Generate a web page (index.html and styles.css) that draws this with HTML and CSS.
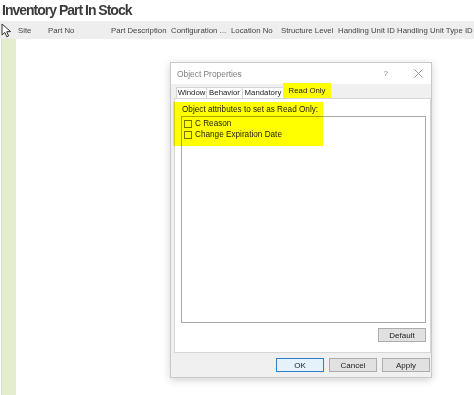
FILE: index.html
```html
<!DOCTYPE html>
<html lang="en">
<head>
  <meta charset="UTF-8" />
  <title>Inventory Part In Stock</title>
  <link rel="stylesheet" href="styles.css">
</head>
<body>

  <h1 class="page-title">Inventory Part In Stock</h1>

  <div class="grid">
    <div class="grid-head">
      <div class="col col-cursor">
        <svg width="12" height="15" viewBox="0 0 12 15">
          <path d="M1 1 L1 12 L3.8 9.4 L5.8 13.8 L7.6 13 L5.7 8.7 L9.6 8.6 Z" fill="#fff" stroke="#333" stroke-width="1" stroke-linejoin="round"/>
        </svg>
      </div>
      <div class="col" style="width:30px">Site</div>
      <div class="col" style="width:63px">Part No</div>
      <div class="col" style="width:60px">Part Description</div>
      <div class="col" style="width:60px">Configuration ...</div>
      <div class="col" style="width:50px">Location No</div>
      <div class="col" style="width:57px">Structure Level</div>
      <div class="col" style="width:59px">Handling Unit ID</div>
      <div class="col" style="width:78px">Handling Unit Type ID</div>
    </div>
    <div class="grid-body">
      <div class="row-strip"></div>
    </div>
  </div>

  <!-- ventana de propiedades -->
  <div class="dialog">
    <div class="dialog-title">
      <span>Object Properties</span>
      <span class="title-btns">
        <span class="help">?</span>
        <svg width="9" height="9" viewBox="0 0 9 9">
          <path d="M0.5 0.5 L8.5 8.5 M8.5 0.5 L0.5 8.5" stroke="#888" stroke-width="0.9"/>
        </svg>
      </span>
    </div>

    <div class="tabs">
      <div class="tab" style="width:29px">Window</div>
      <div class="tab" style="width:35px">Behavior</div>
      <div class="tab" style="width:40px">Mandatory</div>
      <div class="tab active" style="width:46px">Read Only</div>
    </div>

    <div class="panel">
      <div class="panel-label">Object attributes to set as Read Only:</div>
      <div class="listbox">
        <label class="item"><span class="check"></span>C Reason</label>
        <label class="item"><span class="check"></span>Change Expiration Date</label>
      </div>
      <div class="panel-actions">
        <button class="btn">Default</button>
      </div>
      <div class="marker"></div>
    </div>

    <div class="dialog-footer">
      <button class="btn btn-ok">OK</button>
      <button class="btn">Cancel</button>
      <button class="btn">Apply</button>
    </div>
  </div>

</body>
</html>
```

FILE: styles.css
```css
body {
  margin: 0;
  width: 474px;
  height: 395px;
  overflow: hidden;
  background-color: #fff;
  font-family: 'Liberation Sans', Arial, sans-serif;
  position: relative;
}

.page-title {
  margin: 0;
  height: 21px;
  padding: 1px 0 0 2px;
  box-sizing: border-box;
  font-family: 'Liberation Sans', Arial, sans-serif;
  font-size: 14px;
  letter-spacing: -1px;
  font-weight: bold;
  color: #3b3b3b;
  line-height: 18px;
}

.grid-head {
  display: flex;
  height: 18px;
  background-color: #eeeeee;
  align-items: center;
}

.col {
  flex: none;
  box-sizing: border-box;
  padding-left: 1px;
  font-size: 7.8px;
  color: #444;
  white-space: nowrap;
  overflow: hidden;
}

.col-cursor {
  width: 17px;
  padding: 0 0 0 1px;
  display: flex;
  align-items: center;
}

.grid-body {
  height: 356px;
}

.row-strip {
  margin-left: 1px;
  width: 15px;
  height: 100%;
  background-color: #e4edcc;
  border-left: 1px solid #d9ddcb;
  box-sizing: border-box;
}

/* ---------- dialog ---------- */
.dialog {
  position: absolute;
  left: 170px;
  top: 62px;
  width: 262px;
  height: 316px;
  background-color: #f0f0f0;
  border: 1px solid #c9c9c9;
  box-sizing: border-box;
  box-shadow: 0 2px 8px rgba(0, 0, 0, 0.18);
  display: flex;
  flex-direction: column;
}

.dialog-title {
  height: 21px;
  background-color: #fff;
  display: flex;
  align-items: center;
  justify-content: space-between;
  padding: 0 8px 0 6px;
  font-size: 8.4px;
  color: #808080;
}

.title-btns {
  display: flex;
  align-items: center;
  gap: 26px;
}

.help {
  font-size: 8px;
  color: #888;
}

.tabs {
  display: flex;
  align-items: flex-end;
  height: 14px;
  padding-left: 5px;
}

.tab {
  height: 10px;
  box-sizing: content-box;
  font-size: 7.8px;
  line-height: 10px;
  text-align: center;
  white-space: nowrap;
  color: #222;
  background-color: #fff;
  border: 1px solid #d6d6d6;
  border-bottom: none;
  margin-right: -1px;
}

.tab.active {
  height: 14px;
  line-height: 13px;
  background-color: #ffff00;
  border-color: #ffff00;
}

.panel {
  position: relative;
  flex: 1;
  margin: 0 0 0 3px;
  background-color: #fff;
  border: 1px solid #d6d6d6;
  padding: 4px 4px 10px 5px;
  display: flex;
  flex-direction: column;
}

.panel-label {
  font-size: 8.2px;
  color: #222;
  height: 12px;
  line-height: 12px;
  padding-left: 2px;
  margin-top: 1px;
}

.listbox {
  height: 207px;
  border: 1px solid #a9a9a9;
  box-sizing: border-box;
  margin-left: 1px;
  padding-top: 1px;
}

.item {
  display: flex;
  align-items: center;
  gap: 3px;
  height: 11px;
  padding-left: 2px;
  font-size: 8.2px;
  color: #222;
}

.check {
  width: 6px;
  height: 6px;
  border: 1px solid #777;
  background-color: #fff;
}

.panel-actions {
  display: flex;
  justify-content: flex-end;
  margin-top: 5px;
}

.btn {
  width: 48px;
  height: 14px;
  padding: 0;
  font-family: 'Liberation Sans', Arial, sans-serif;
  font-size: 8px;
  color: #222;
  background-color: #e1e1e1;
  border: 1px solid #adadad;
}

.btn-ok {
  border-color: #2f7fc8;
  background-color: #e5f1fb;
}

.marker {
  position: absolute;
  left: -2px;
  top: 3px;
  width: 150px;
  height: 44px;
  background-color: #ffff00;
  mix-blend-mode: multiply;
  pointer-events: none;
}

.dialog-footer {
  height: 24px;
  display: flex;
  align-items: center;
  justify-content: flex-end;
  gap: 5px;
  padding-right: 1px;
}
```
